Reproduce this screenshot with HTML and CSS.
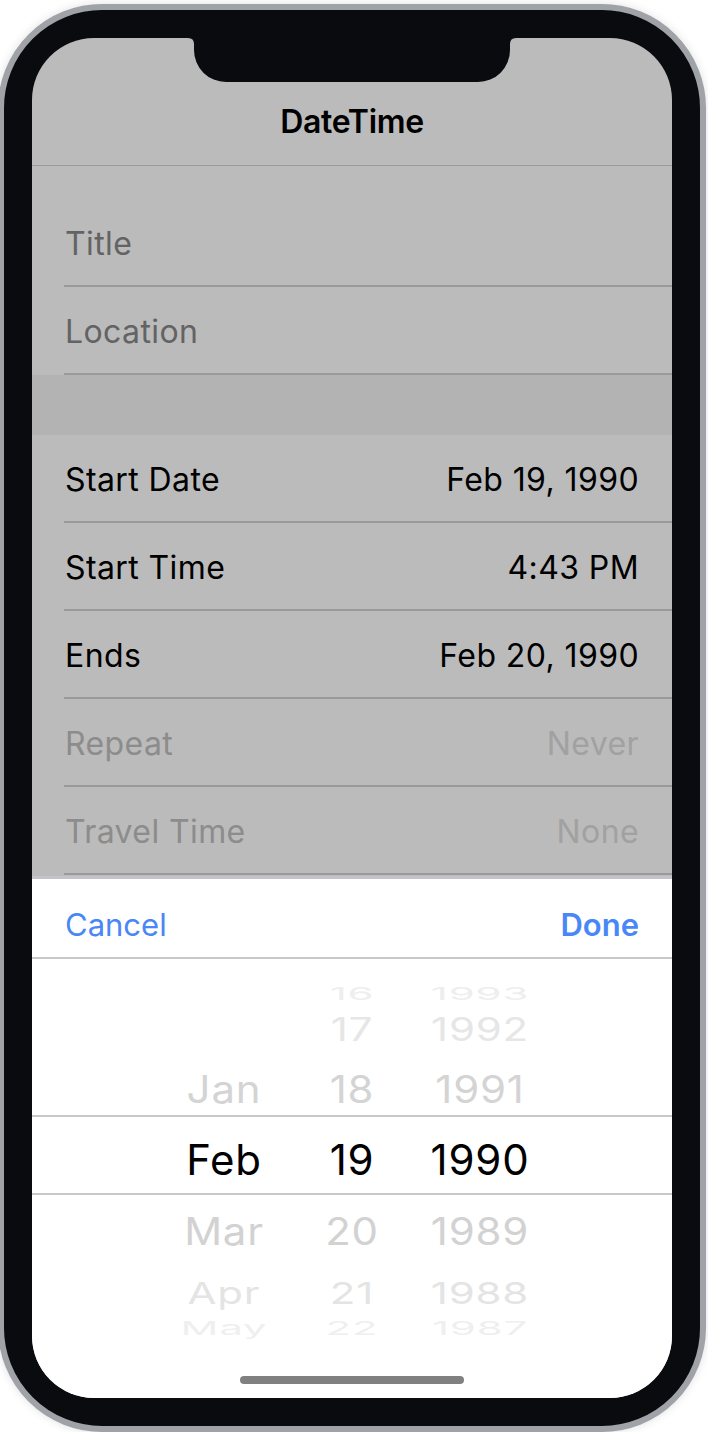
FILE: index.html
```html
<!DOCTYPE html>
<html lang="en">
<head>
    <meta charset="UTF-8">
    <meta name="viewport" content="width=device-width, initial-scale=1.0">
    <title>DateTime</title>
    <link rel="stylesheet" href="styles.css">
</head>
<body>
    <div class="phone">
        <div class="screen">
            <svg class="notch" width="328" height="44" viewBox="0 0 328 44">
                <path d="M0 0 Q6 0 6 6 V12 A32 32 0 0 0 38 44 H290 A32 32 0 0 0 322 12 V6 Q322 0 328 0 Z" fill="#0a0b0f"/>
            </svg>

            <div class="navbar">DateTime</div>

            <!-- Evento -->
            <div class="form-group">
                <div class="cell"><div class="cell-inner"><span class="placeholder">Title</span></div></div>
                <div class="cell"><div class="cell-inner"><span class="placeholder">Location</span></div></div>
            </div>

            <div class="section-gap"></div>

            <!-- Fechas -->
            <div class="form-group form-group-flat">
                <div class="cell"><div class="cell-inner"><span>Start Date</span><span>Feb 19, 1990</span></div></div>
                <div class="cell"><div class="cell-inner"><span>Start Time</span><span>4:43 PM</span></div></div>
                <div class="cell"><div class="cell-inner"><span>Ends</span><span>Feb 20, 1990</span></div></div>
                <div class="cell cell-muted"><div class="cell-inner"><span>Repeat</span><span class="value-muted">Never</span></div></div>
                <div class="cell cell-muted"><div class="cell-inner"><span>Travel Time</span><span class="value-muted">None</span></div></div>
            </div>

            <!-- Selector de fecha -->
            <div class="sheet">
                <div class="toolbar">
                    <span class="btn">Cancel</span>
                    <span class="btn btn-done">Done</span>
                </div>
                <div class="picker">
                    <div class="wheel-row row-far-top"><span></span><span>16</span><span>1993</span></div>
                    <div class="wheel-row row-near-top"><span></span><span>17</span><span>1992</span></div>
                    <div class="wheel-row row-prev"><span>Jan</span><span>18</span><span>1991</span></div>
                    <div class="wheel-row row-selected"><span>Feb</span><span>19</span><span>1990</span></div>
                    <div class="wheel-row row-next"><span>Mar</span><span>20</span><span>1989</span></div>
                    <div class="wheel-row row-near-bottom"><span>Apr</span><span>21</span><span>1988</span></div>
                    <div class="wheel-row row-far-bottom"><span>May</span><span>22</span><span>1987</span></div>
                </div>
                <div class="home-indicator"></div>
            </div>
        </div>
    </div>
</body>
</html>
```

FILE: styles.css
```css
:root {
    /* Marco */
    --frame: #0a0b0f;
    --frame-edge: #9fa2a7;

    /* Contenido atenuado */
    --dim-bg: #bbbbbb;
    --dim-gap: #b3b3b3;
    --dim-line: #9a9a9a;
    --dim-placeholder: #636363;
    --dim-muted: #8c8c8c;
    --dim-value-muted: #a1a1a1;

    /* Hoja */
    --tint: #4a87f6;
    --sheet-line: #c8c7cc;

    --font: "Inter", "Noto Sans", sans-serif;
}

body {
    margin: 0;
    background: #fff;
    font-family: var(--font);
}

.phone {
    box-sizing: border-box;
    width: 708px;
    height: 1428px;
    margin: 4px 0 0 -2px;
    padding: 28px;
    border: 6px solid var(--frame-edge);
    border-radius: 104px;
    background: var(--frame);
    box-shadow: 0 0 10px rgba(0,0,0,0.12);
}

.screen {
    position: relative;
    width: 640px;
    height: 1360px;
    border-radius: 62px;
    overflow: hidden;
    background: var(--dim-bg);
    display: flex;
    flex-direction: column;
}

.notch {
    position: absolute;
    top: 0;
    left: 156px;
    display: block;
}

.navbar {
    box-sizing: border-box;
    height: 128px;
    flex-shrink: 0;
    padding-top: 64px;
    line-height: 40px;
    text-align: center;
    font-size: 32px;
    font-weight: 600;
    letter-spacing: -0.3px;
    color: #000;
    border-bottom: 1px solid var(--dim-line);
}

.form-group {
    padding-top: 33px;
    flex-shrink: 0;
}

.form-group-flat {
    padding-top: 0;
}

.cell {
    padding-left: 32px;
    font-size: 32px;
    letter-spacing: 0.4px;
    color: #000;
}

.cell-inner {
    box-sizing: border-box;
    height: 88px;
    padding: 2px 33px 0 1px;
    display: flex;
    align-items: center;
    justify-content: space-between;
    border-bottom: 2px solid var(--dim-line);
}

.placeholder {
    color: var(--dim-placeholder);
}

.cell-muted {
    color: var(--dim-muted);
}

.value-muted {
    color: var(--dim-value-muted);
}

.section-gap {
    height: 60px;
    flex-shrink: 0;
    background: var(--dim-gap);
}

.sheet {
    flex: 1;
    background: #fff;
    border-top: 3px solid #c4c4c8;
    margin-top: 1px;
}

.toolbar {
    box-sizing: border-box;
    height: 80px;
    padding: 12px 33px 0 33px;
    display: flex;
    align-items: center;
    justify-content: space-between;
    border-bottom: 2px solid var(--sheet-line);
    font-size: 31px;
    letter-spacing: 0;
    color: var(--tint);
}

.btn-done {
    font-weight: 600;
}

.picker {
    display: flex;
    flex-direction: column;
}

.wheel-row {
    display: grid;
    grid-template-columns: 128px 128px 128px;
    justify-content: center;
    align-items: center;
    text-align: center;
    font-size: 42px;
    letter-spacing: 0.8px;
}

.wheel-row span {
    display: block;
}

.row-far-top {
    height: 34px;
    margin-top: 9px;
    color: #eeeeee;
}
.row-far-top span { transform: scaleY(0.42); }

.row-near-top {
    height: 40px;
    margin-top: 2px;
    color: #e6e6e6;
}
.row-near-top span { transform: scaleY(0.76); }

.row-prev {
    height: 52px;
    margin-top: 19px;
    color: #d4d4d4;
}
.row-prev span { transform: scaleY(0.9); }

.row-selected {
    box-sizing: border-box;
    height: 80px;
    padding-top: 8px;
    border-top: 2px solid var(--sheet-line);
    border-bottom: 2px solid var(--sheet-line);
    color: #000;
}

.row-next {
    height: 56px;
    margin-top: 8px;
    color: #d2d2d2;
}
.row-next span { transform: scaleY(0.9); }

.row-near-bottom {
    height: 36px;
    margin-top: 8px;
    color: #e4e4e4;
}
.row-near-bottom span { transform: scaleY(0.72); }

.row-far-bottom {
    height: 32px;
    margin-top: 0;
    color: #efefef;
}
.row-far-bottom span { transform: scaleY(0.45); }

.home-indicator {
    width: 224px;
    height: 8px;
    margin: 41px auto 0;
    border-radius: 4px;
    background: #808080;
}
```
